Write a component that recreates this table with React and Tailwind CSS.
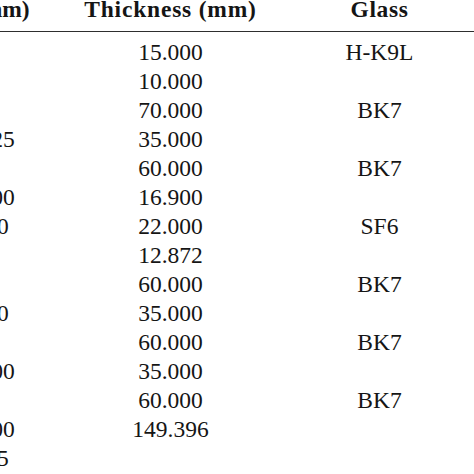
import React from 'react';

const rows = [
  { radius: '', thickness: '15.000', glass: 'H-K9L' },
  { radius: '', thickness: '10.000', glass: '' },
  { radius: '', thickness: '70.000', glass: 'BK7' },
  { radius: '−1062.125', thickness: '35.000', glass: '' },
  { radius: '', thickness: '60.000', glass: 'BK7' },
  { radius: '−1248.300', thickness: '16.900', glass: '' },
  { radius: '−512.200', thickness: '22.000', glass: 'SF6' },
  { radius: '', thickness: '12.872', glass: '' },
  { radius: '', thickness: '60.000', glass: 'BK7' },
  { radius: '−831.500', thickness: '35.000', glass: '' },
  { radius: '', thickness: '60.000', glass: 'BK7' },
  { radius: '−2107.600', thickness: '35.000', glass: '' },
  { radius: '', thickness: '60.000', glass: 'BK7' },
  { radius: '−1430.000', thickness: '149.396', glass: '' },
  { radius: '−416.625', thickness: '', glass: '' },
];

function App() {
  return (
    <div className="w-[474px] h-[474px] overflow-hidden bg-white text-[#151515] font-['Liberation_Serif',serif] text-[23.5px] leading-[29px]">
      <div className="ml-[-136px] mt-[-5px] w-[620px]">
        <div className="grid grid-cols-[200px_213px_205px] font-bold pb-[7px] border-b border-[#2e2e2e]">
          <div className="text-center">Radius (mm)</div>
          <div className="text-center tracking-[0.8px]">Thickness (mm)</div>
          <div className="text-center tracking-[0.6px]">Glass</div>
        </div>
        <div className="pt-[6px]">
          {rows.map((r, i) => (
            <div key={i} className="grid grid-cols-[200px_213px_205px] h-[29px]">
              <div className="text-center">{r.radius}</div>
              <div className="text-center">{r.thickness}</div>
              <div className="text-center">{r.glass}</div>
            </div>
          ))}
        </div>
      </div>
    </div>
  );
}

export default App;
